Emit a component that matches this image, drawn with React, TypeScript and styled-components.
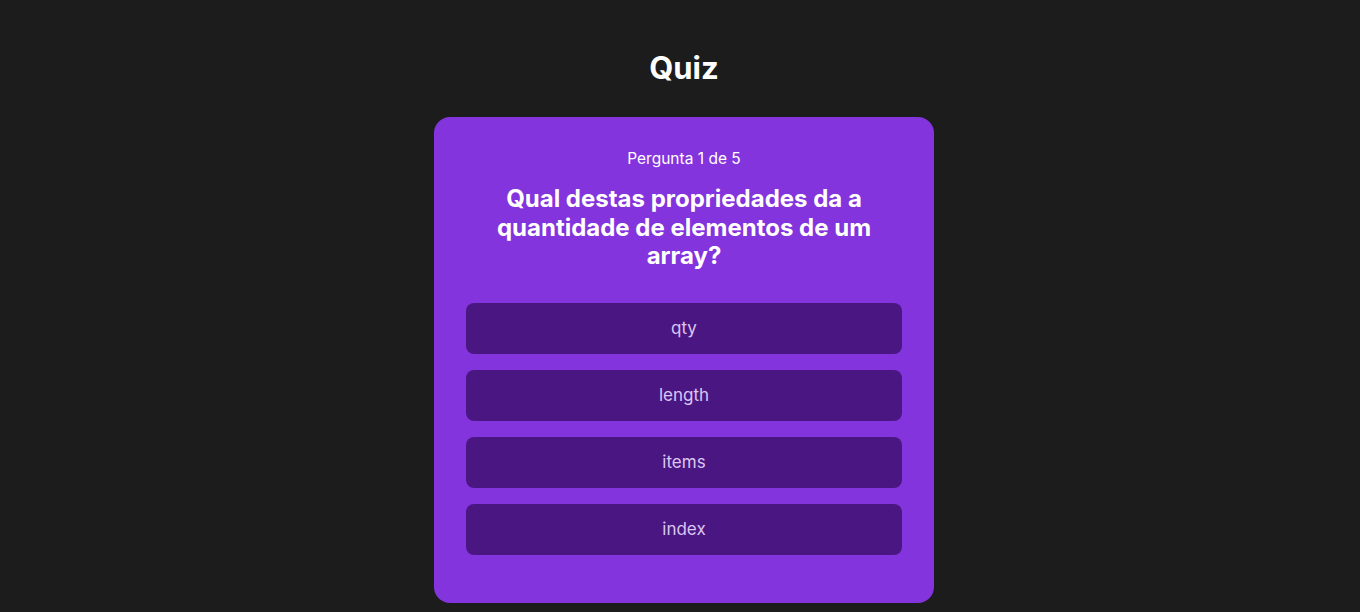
import styled, { createGlobalStyle } from 'styled-components'

const GlobalStyle = createGlobalStyle`
  * {
    box-sizing: border-box;
  }

  body {
    margin: 0;
    background: #1c1c1c;
    color: #fff;
    font-family: Inter, "Noto Sans", sans-serif;
  }
`

const Page = styled.div`
  display: flex;
  flex-direction: column;
  align-items: center;
  padding: 49px 0 0 8px;
`

const Title = styled.h1`
  margin: 0 0 31px;
  font-size: 31px;
  line-height: 37px;
  font-weight: 700;
`

const Card = styled.div`
  width: 500px;
  padding: 32px 32px 32px;
  background: #8434dc;
  border-radius: 16px;
  text-align: center;
`

const Counter = styled.p`
  margin: 0 0 17px;
  font-size: 15.5px;
  line-height: 19px;
  font-weight: 400;
`

const Question = styled.h2`
  margin: 0 auto 32px;
  max-width: 420px;
  font-size: 24px;
  line-height: 28.5px;
  font-weight: 700;
`

const Options = styled.div`
  display: flex;
  flex-direction: column;
  gap: 16px;
  margin-bottom: 16px;
`

const Option = styled.button`
  height: 51px;
  border: none;
  border-radius: 8px;
  background: #4a1682;
  color: #dcc6f2;
  font-family: inherit;
  font-size: 17px;
  cursor: pointer;
`

const options = ['qty', 'length', 'items', 'index']

function App() {
  return (
    <>
      <GlobalStyle />
      <Page>
        <Title>Quiz</Title>
        <Card>
          <Counter>Pergunta 1 de 5</Counter>
          <Question>Qual destas propriedades da a quantidade de elementos de um array?</Question>
          <Options>
            {options.map((o) => (
              <Option key={o}>{o}</Option>
            ))}
          </Options>
        </Card>
      </Page>
    </>
  )
}

export default App
